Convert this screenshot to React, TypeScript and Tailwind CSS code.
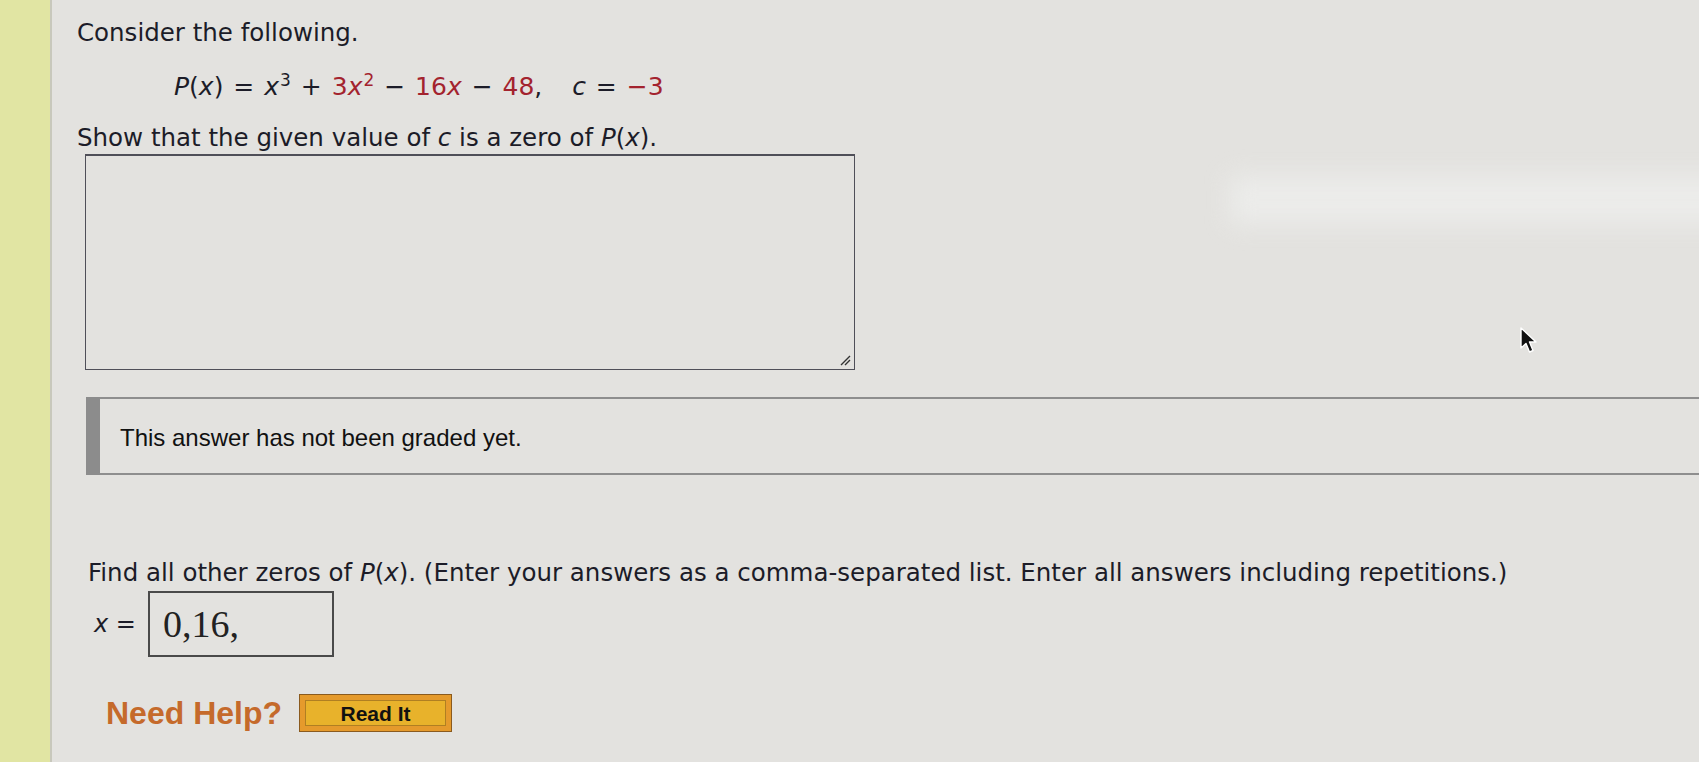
import React from 'react';

const sans = "font-['DejaVu_Sans',Verdana,sans-serif]";

const Red: React.FC<{ children: React.ReactNode }> = ({ children }) => (
  <span className="text-[#a3232e]">{children}</span>
);

const Sup: React.FC<{ children: React.ReactNode; red?: boolean }> = ({ children, red }) => (
  <span className={`text-[17px] relative -top-[9px] ml-[1px] ${red ? 'text-[#a3232e]' : ''}`}>{children}</span>
);

const Cursor = () => (
  <svg className="absolute left-[1520px] top-[327px]" width="18" height="28" viewBox="0 0 18 28">
    <path d="M1 1 L1 21 L6 16.5 L9.5 25 L13 23.5 L9.5 15 L16 15 Z" fill="#111" stroke="#fff" strokeWidth="1.4" strokeLinejoin="round" />
  </svg>
);

export default function App() {
  return (
    <div className="relative flex w-[1699px] h-[762px] overflow-hidden bg-[#e3e2df]">
      {/* bande de gauche */}
      <div className="w-[52px] shrink-0 bg-[#e1e5a3] border-r-2 border-[#c8c8bc]" />

      <div className={`flex-1 pl-[25px] pt-[18px] text-[#1c1c28] ${sans}`}>
        <p className="text-[24.5px] leading-[30px]">Consider the following.</p>

        <p className="mt-[24px] ml-[97px] text-[25px] leading-[30px] whitespace-pre [word-spacing:2px]">
          <i>P</i>(<i>x</i>) = <i>x</i><Sup>3</Sup> + <Red>3<i>x</i></Red><Sup red>2</Sup> − <Red>16<i>x</i></Red> − <Red>48</Red>,   <i>c</i> = <Red>−3</Red>
        </p>

        <p className="mt-[19px] text-[24.5px] leading-[30px]">
          Show that the given value of <i>c</i> is a zero of <i>P</i>(<i>x</i>).
        </p>

        {/* zone de réponse */}
        <div className="relative mt-[1px] ml-[8px] w-[770px] h-[216px] border border-t-2 border-[#4f4f58]">
          <svg className="absolute right-[3px] bottom-[3px]" width="12" height="12" viewBox="0 0 12 12">
            <path d="M2 11 L11 2 M6 11 L11 6" stroke="#333" strokeWidth="1.4" />
          </svg>
        </div>

        {/* état de la correction */}
        <div className="mt-[27px] ml-[9px] flex h-[78px] border-t-2 border-b-2 border-[#8e8e8e] font-['Liberation_Sans',Arial,sans-serif]">
          <div className="w-[14px] bg-[#8c8c8c] -my-[2px]" />
          <p className="pl-[20px] pt-[21px] text-[24px] text-[#111]">This answer has not been graded yet.</p>
        </div>

        <p className="mt-[83px] ml-[11px] text-[24.5px] leading-[30px]">
          Find all other zeros of <i>P</i>(<i>x</i>). (Enter your answers as a comma-separated list. Enter all answers including repetitions.)
        </p>

        <div className="mt-[3px] ml-[17px] flex items-center gap-[12px]">
          <span className="text-[24px]"><i>x</i> =</span>
          <div className="w-[186px] h-[66px] border-2 border-[#4a4a4a] flex items-center pl-[13px] font-['Liberation_Serif','Times_New_Roman',serif] text-[38px] text-[#222]">
            0,16,
          </div>
        </div>

        <div className="mt-[32px] ml-[29px] flex items-center gap-[17px] font-['Liberation_Sans',Arial,sans-serif]">
          <span className="text-[32px] font-bold text-[#c56a2b]">Need Help?</span>
          <button className="w-[153px] h-[38px] p-[5px] bg-[#e59a2c] border border-[#8a5a1e]">
            <span className="flex h-full items-center justify-center bg-[#e8b22b] border border-[#b07f22] text-[21px] font-bold text-[#111] leading-none">
              Read It
            </span>
          </button>
        </div>
      </div>

      {/* reflet de l'écran */}
      <div className="absolute left-[1230px] top-[176px] w-[520px] h-[48px] bg-[#f2f3f2] opacity-60 blur-[12px]" />
      <Cursor />
    </div>
  );
}
